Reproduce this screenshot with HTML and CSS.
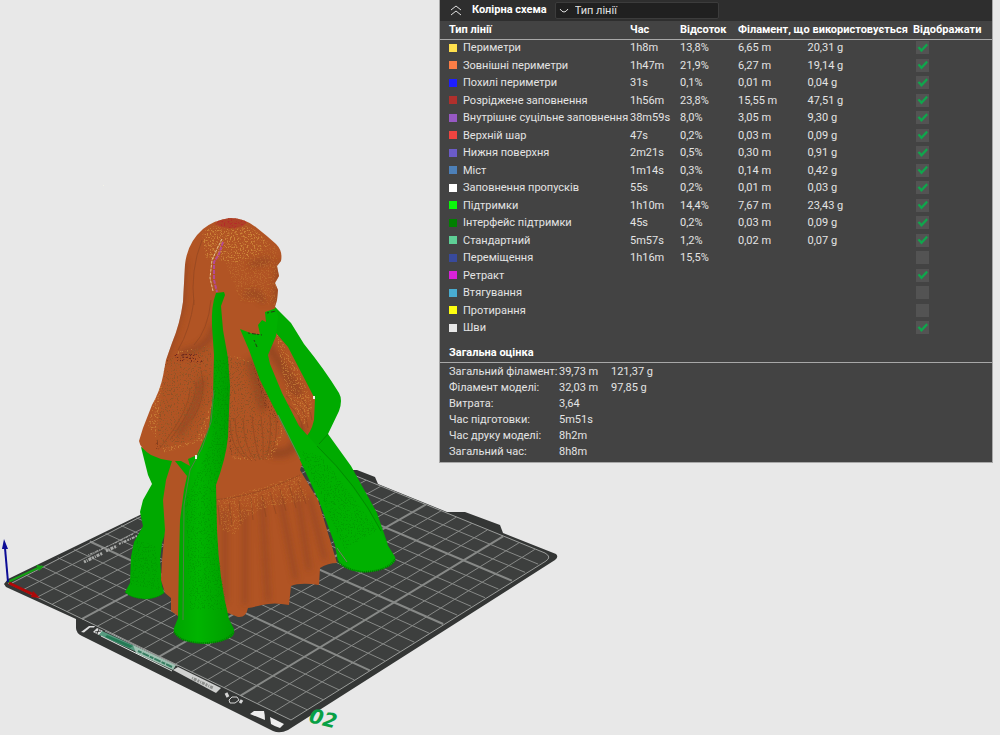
FILE: index.html
```html
<!DOCTYPE html>
<html lang="uk">

<head>
    <meta charset="UTF-8">
    <meta name="viewport" content="width=device-width, initial-scale=1.0">
    <title>Попередній перегляд</title>
    <link rel="stylesheet" href="styles.css">
</head>

<body>

    <!-- 3D scene -->
    <svg class="scene" viewBox="0 0 1000 735" preserveAspectRatio="xMinYMin meet" aria-hidden="true">
        <defs>
            <filter id="grain" x="0" y="0" width="100%" height="100%">
                <feTurbulence type="fractalNoise" baseFrequency="0.7" numOctaves="2" seed="4" result="n" />
                <feColorMatrix in="n" type="matrix" values="0 0 0 0 0  0 0 0 0 0  0 0 0 0 0  7 0 0 0 -3.7" result="m" />
                <feComposite in="SourceGraphic" in2="m" operator="in" />
            </filter>
            <filter id="soft" x="-20%" y="-20%" width="140%" height="140%">
                <feGaussianBlur stdDeviation="3" />
            </filter>
            <linearGradient id="gFront" x1="0" x2="1" y1="0" y2="0">
                <stop offset="0" stop-color="#00a400" />
                <stop offset="0.4" stop-color="#00b400" />
                <stop offset="1" stop-color="#009c00" />
            </linearGradient>
            <clipPath id="bodyClip">
                <use href="#figure" />
            </clipPath>
        </defs>

        <!-- Build plate -->
        <path fill="#343635" d="M4 584 L8 579 L142 514 L280 443 L350 470 L357 470 L375 477 L378 484 L447 512 L465 512 L500 525 L503 533 L556 554 Q559 557 555 560 L288 730 Q280 734 273 731 L82 636 Q76 633 76 628 L76 619 L6 587 Z" />
        <path fill="#3d3f3e" d="M10 583 L280 445 L548 554 Q552 557 547 560 L291 720 Z" />
        <g id="grid" fill="none" stroke="#878987"></g>
        <path fill="none" stroke="#9a9c9a" d="M12 583 L280 445 L545 553 Q552 557 546 561 L291 720 L8 583" />

        <!-- Plate markings -->
        <g fill="none" stroke="#a9aba9" stroke-width="3" stroke-dasharray="2 1 1 1 3 1">
            <path d="M84 562 L103 553" />
            <path d="M106 551 L117 546" />
            <path stroke-width="2" d="M119 544 L137 536" />
        </g>
        <path fill="none" stroke="#a9aba9" stroke-dasharray="1 1 3 1" d="M88 555 L108 546 M113 544 L133 534" />
        <path fill="#dedede" d="M81 632 l8 -6 h6 l-1 1.500 h-4 l-6 5z M93 632 l4 -4 6 3 -4 4z" />
        <path fill="none" stroke="#3d3f3e" d="M95 632 l6 -1 M97 634 l2 -5" />
        <path fill="#579b80" d="M102 631 L135 646 L141 653 L137 652 L99 635 Z" />
        <path fill="#247a55" d="M107 635 L133 646 L130 648 L105 637 Z" />
        <path fill="#9fc1b2" d="M133 645 L176 665 L173 670 L136 653 Z" />
        <path fill="none" stroke="#e0e5e2" d="M101 636 L172 671" />
        <path fill="none" stroke="#9fa3a1" d="M105 631 L178 666" />
        <path fill="none" stroke="#367d61" stroke-width="2" stroke-dasharray="4 1 7 1" d="M138 651 L172 667" />
        <path fill="#d0d1d0" d="M173 670 L178 667 L221 688 L216 693 Z" />
        <path fill="none" stroke="#8d8f8d" stroke-width="3" stroke-dasharray="1 1 3 1 2 1" d="M192 678 L213 688" />
        <path fill="none" stroke="#d6d6d6" d="M232 697 h5 l2 3 -4 3 h-5 l-1 -3z" />
        <path fill="none" stroke="#d6d6d6" stroke-width="3" d="M226 693 l2 4 M240 703 l2 -3" />
        <path fill="#ededed" d="M254 711 l10 0 q1 4 1 9 l-15 -6z M270 717 l14 7 -4 4 q-6 -2 -9 -4z" />
        <text class="plate-number" transform="translate(308 722) rotate(14)">02</text>

        <!-- Supports behind the figure -->
        <path fill="#00a900" d="M141 447 L150 450 L185 452 L185 475 L172 492 L168 510 L168 525 L162 543 L160 560 L162 586 Q164 591 164 593 Q156 599 145 599 Q130 598 125 592 L130 583 L131 557 L134 542 L143 526 L140 512 L143 500 L152 484 L148 475 Z" />
        <path fill="none" stroke="#008a00" stroke-dasharray="1 1" d="M125 592 Q130 598 145 599 Q158 598 164 593" />

        <!-- Figure -->
        <path id="figure" fill="#b15424" d="M230 218 Q214 220 203 229 Q187 243 185 265 L183 302 Q180 324 172 343 L166 360 L163 376 Q160 391 152 405 L143 428 L139 441 Q140 448 151 455 L161 459 L172 461 L166 480 L163 500 L165 530 L162 560 L161 580 L165 593 L171 598 L171 611 L178 616 L228 613 L238 617 Q246 618 248 608 Q254 607 262 605 Q274 602 289 605 L291 586 Q300 582 319 585 L320 568 Q328 563 337 563 L318 500 L300 470 L312 436 Q319 420 316 398 L307 363 L293 328 L275 307 L277 300 L278 290 L275 283 L279 276 L277 266 L281 261 Q283 251 276 244 Q266 235 257 228 Q245 218 230 218 Z" />
        <g clip-path="url(#bodyClip)">
            <g filter="url(#soft)" fill="none" stroke="#8b4220" opacity="0.750">
                <path stroke-width="6" d="M214 325 Q210 350 180 353 M202 378 Q200 405 178 435 M280 262 L277 305" />
                <path stroke-width="9" d="M268 345 L300 395 M250 359 L264 410 M301 424 Q297 460 270 452" />
                <path stroke-width="4" d="M245 510 V605 M280 497 L296 580 M262 500 L268 602 M309 496 L325 560 M225 510 V602 M297 492 L309 570" />
                <path stroke-width="5" d="M245 296 Q255 287 264 302 M250 265 L270 260 M184 260 L182 305 L166 358" />
            </g>
            <g fill="none" stroke="#8f4521" opacity="0.650">
                <path d="M230 420 Q230 450 248 460 M235 418 Q235 450 252 461 M243 418 Q244 450 256 461 M252 416 Q254 443 260 460 M261 416 Q264 440 263 460 M270 416 Q272 440 266 460 M276 420 Q278 440 270 458" />
                <path d="M286 396 Q306 406 308 428 M289 390 Q311 402 312 420 M284 402 Q302 412 303 433 M201 370 Q208 396 192 420 M196 382 Q198 402 170 440 M190 388 Q190 410 160 448" />
                <path d="M214 500 Q255 497 300 475 M218 505 L220 525 M229 503 L232 525 M239 500 L241 524 M251 498 L253 520 M262 495 L266 517 M270 492 L276 514 M280 489 L286 511 M289 485 L296 508 M298 481 L306 504" />
                <path d="M202 240 Q190 270 194 305 M194 300 Q190 330 178 350 M211 300 Q208 330 194 345" />
            </g>
            <g filter="url(#grain)" fill="#cf8a3a">
                <path opacity="0.900" d="M202 232 Q230 215 256 231 L270 244 L263 252 L238 262 L206 259 Z" />
                <path opacity="0.350" d="M224 260 L278 245 L276 305 L240 301 Z" />
                <path opacity="0.700" d="M163 368 L175 352 L211 345 L213 400 L204 440 L165 453 L148 425 Z" />
                <path opacity="0.650" d="M225 354 L250 360 L266 410 L285 430 L272 460 L232 460 Z" />
                <path opacity="0.650" d="M275 329 L298 370 L313 404 L305 428 L286 393 Z" />
                <path opacity="0.450" d="M218 500 L300 475 L309 500 L265 508 L246 518 L235 535 L222 530 Z" />
            </g>
            <ellipse fill="#ad3a28" opacity="0.700" cx="231" cy="223" rx="14" ry="5" />
            <g filter="url(#grain)">
                <ellipse fill="#b52a2a" cx="231" cy="223" rx="16" ry="6" />
                <path fill="#7d2420" d="M173 354 L198 354 L203 363 L176 362 Z" />
                <path fill="#5f2c18" opacity="0.500" d="M165 358 L211 345 L213 400 L196 440 L155 450 Z M224 355 L260 365 L281 430 L265 460 L230 455 Z" />
            </g>
        </g>
        <path fill="none" stroke="#e3c493" stroke-dasharray="3 1" d="M222 239 L217 249 L212 260 L210 278 L213 291" />
        <path fill="none" stroke="#b64991" stroke-width="2" stroke-dasharray="4 1" d="M223 242 L219 254 L214 262 L214 280 L217 292" />

        <!-- Supports on the right -->
        <path fill="#00ab00" d="M275 307 L291 323 L304 344 Q325 370 339 393 Q343 400 339 411 L328 434 L351 466 L377 513 L388 545 L370 535 L302 441 Q311 434 314 420 L315 399 L288 347 L276 333 Z" />
        <path fill="#00b100" d="M240 329 L253 334 L260 334 L258 325 L262 320 L266 322 L265 312 L271 310 L276 308 L278 317 L276 336 L268 355 L270 364 L282 393 L299 426 L317 446 Q353 483 377 524 L387 544 L395 557 Q397 562 388 567 Q370 575 354 571 Q338 567 337 556 L335 545 L319 501 L299 458 L277 414 L260 380 L249 350 Z" />
        <path fill="none" stroke="#008c00" d="M317 446 Q357 484 381 531 M319 444 L328 434" />
        <path fill="none" stroke="#007900" stroke-width="2" stroke-dasharray="1 1" d="M338 562 Q347 570 363 572 Q389 571 395 559" />
        <path fill="none" stroke="#263b16" stroke-dasharray="2 2 4 1" d="M248 333 L262 335 M254 340 L257 347 M267 313 L276 311" />
        <path fill="none" stroke="#777965" d="M278 415 L300 459 M337 548 L347 562" />

        <!-- Front support -->
        <path fill="url(#gFront)" d="M216 293 L224 292 L225 295 L221 306 L223 330 L228 358 L230 386 L228 437 Q226 458 216 485 L217 530 Q219 580 229 619 L234 629 Q236 637 225 640 Q205 647 186 641 Q172 636 174 628 L178 618 L179 560 L180 520 L184 490 L187 476 L175 461 L181 461 L190 466 L188 459 L197 455 L209 428 L213 395 L214 355 L212 326 Q211 306 216 293 Z" />
        <path fill="none" stroke="#527f45" d="M214 390 L211 422 L202 448 L190 470 L184 505 L183 620" />
        <path fill="none" stroke="#007f00" stroke-width="2" stroke-dasharray="1 1" d="M174 632 Q181 643 204 643 Q226 643 234 632" />
        <g filter="url(#grain)" fill="#007f00" opacity="0.300">
            <path d="M214 360 L229 360 L228 437 L216 485 L218 550 L227 610 L190 610 L185 500 L212 440 Z" />
            <path d="M130 585 L135 540 L155 545 L160 590 Z M300 450 L322 456 L378 530 L345 550 Z" />
        </g>
        <path fill="#f3f3e9" d="M195 455 h2 v4 h-2z M313 396 h2 v3 h-2z M103 185 h1 v1 h-1z" />

        <!-- Origin axes -->
        <g stroke-width="2" fill="none">
            <path stroke="#14a014" d="M8 582 L38 568" />
            <path stroke="#b00808" stroke-width="3" d="M9 583 L32 594" />
            <path stroke="#0c0c96" d="M8 582 L5 548" />
        </g>
        <path fill="#14a014" d="M36 565 L44 566 L39 571 Z" />
        <path fill="#b00808" d="M33 591 L40 598 L31 597 Z" />
        <path fill="#0c0c96" d="M4 539 L8 549 L2 549 Z" />
    </svg>

    <!-- Legend panel -->
    <main class="legend">
        <header class="legend-bar">
            <button type="button" class="collapse-btn" aria-label="Згорнути">
                <svg width="12" height="12" viewBox="0 0 12 12" fill="none" stroke="#e0e0e0">
                    <path d="M1 5 L6 1 L11 5 M1 10 L6 6 L11 10" />
                </svg>
            </button>
            <label for="scheme" class="legend-title">Колірна схема</label>
            <div class="select-box">
                <svg width="10" height="6" viewBox="0 0 10 6" fill="none" stroke="#e0e0e0">
                    <path d="M1 1 Q3 4 5 4 Q7 4 9 1" />
                </svg>
                <select id="scheme">
                    <option>Тип лінії</option>
                </select>
            </div>
        </header>

        <table class="lines">
            <thead>
                <tr>
                    <th class="col-name">Тип лінії</th>
                    <th class="col-time">Час</th>
                    <th class="col-percent">Відсоток</th>
                    <th class="col-used" colspan="2">Філамент, що використовується</th>
                    <th class="col-show">Відображати</th>
                </tr>
            </thead>
            <tbody>
                <tr><td><label for="l1"><i class="swatch yellow"></i>Периметри</label></td><td>1h8m</td><td>13,8%</td><td>6,65 m</td><td>20,31 g</td><td><input type="checkbox" id="l1" checked></td></tr>
                <tr><td><label for="l2"><i class="swatch orange"></i>Зовнішні периметри</label></td><td>1h47m</td><td>21,9%</td><td>6,27 m</td><td>19,14 g</td><td><input type="checkbox" id="l2" checked></td></tr>
                <tr><td><label for="l3"><i class="swatch blue"></i>Похилі периметри</label></td><td>31s</td><td>0,1%</td><td>0,01 m</td><td>0,04 g</td><td><input type="checkbox" id="l3" checked></td></tr>
                <tr><td><label for="l4"><i class="swatch brick"></i>Розріджене заповнення</label></td><td>1h56m</td><td>23,8%</td><td>15,55 m</td><td>47,51 g</td><td><input type="checkbox" id="l4" checked></td></tr>
                <tr><td><label for="l5"><i class="swatch purple"></i>Внутрішнє суцільне заповнення</label></td><td>38m59s</td><td>8,0%</td><td>3,05 m</td><td>9,30 g</td><td><input type="checkbox" id="l5" checked></td></tr>
                <tr><td><label for="l6"><i class="swatch red"></i>Верхній шар</label></td><td>47s</td><td>0,2%</td><td>0,03 m</td><td>0,09 g</td><td><input type="checkbox" id="l6" checked></td></tr>
                <tr><td><label for="l7"><i class="swatch violet"></i>Нижня поверхня</label></td><td>2m21s</td><td>0,5%</td><td>0,30 m</td><td>0,91 g</td><td><input type="checkbox" id="l7" checked></td></tr>
                <tr><td><label for="l8"><i class="swatch steel"></i>Міст</label></td><td>1m14s</td><td>0,3%</td><td>0,14 m</td><td>0,42 g</td><td><input type="checkbox" id="l8" checked></td></tr>
                <tr><td><label for="l9"><i class="swatch white"></i>Заповнення пропусків</label></td><td>55s</td><td>0,2%</td><td>0,01 m</td><td>0,03 g</td><td><input type="checkbox" id="l9" checked></td></tr>
                <tr><td><label for="l10"><i class="swatch lime"></i>Підтримки</label></td><td>1h10m</td><td>14,4%</td><td>7,67 m</td><td>23,43 g</td><td><input type="checkbox" id="l10" checked></td></tr>
                <tr><td><label for="l11"><i class="swatch green"></i>Інтерфейс підтримки</label></td><td>45s</td><td>0,2%</td><td>0,03 m</td><td>0,09 g</td><td><input type="checkbox" id="l11" checked></td></tr>
                <tr><td><label for="l12"><i class="swatch mint"></i>Стандартний</label></td><td>5m57s</td><td>1,2%</td><td>0,02 m</td><td>0,07 g</td><td><input type="checkbox" id="l12" checked></td></tr>
                <tr><td><label for="l13"><i class="swatch navy"></i>Переміщення</label></td><td>1h16m</td><td>15,5%</td><td></td><td></td><td><input type="checkbox" id="l13"></td></tr>
                <tr><td><label for="l14"><i class="swatch magenta"></i>Ретракт</label></td><td></td><td></td><td></td><td></td><td><input type="checkbox" id="l14" checked></td></tr>
                <tr><td><label for="l15"><i class="swatch sky"></i>Втягування</label></td><td></td><td></td><td></td><td></td><td><input type="checkbox" id="l15"></td></tr>
                <tr><td><label for="l16"><i class="swatch lemon"></i>Протирання</label></td><td></td><td></td><td></td><td></td><td><input type="checkbox" id="l16"></td></tr>
                <tr><td><label for="l17"><i class="swatch light"></i>Шви</label></td><td></td><td></td><td></td><td></td><td><input type="checkbox" id="l17" checked></td></tr>
            </tbody>
        </table>

        <h2>Загальна оцінка</h2>
        <table class="totals">
            <tr><th>Загальний філамент:</th><td>39,73 m</td><td>121,37 g</td></tr>
            <tr><th>Філамент моделі:</th><td>32,03 m</td><td>97,85 g</td></tr>
            <tr><th>Витрата:</th><td>3,64</td><td></td></tr>
            <tr><th>Час підготовки:</th><td>5m51s</td><td></td></tr>
            <tr><th>Час друку моделі:</th><td>8h2m</td><td></td></tr>
            <tr><th>Загальний час:</th><td>8h8m</td><td></td></tr>
        </table>
    </main>

    <script src="script.js"></script>
</body>

</html>
```

FILE: styles.css
```css
/* Basic Reset and Box Sizing */
* {
    margin: 0;
    padding: 0;
    box-sizing: border-box;
}

body {
    background: #e8e8e8;
    color: #e4e4e4;
    font-family: Roboto, 'Liberation Sans', sans-serif;
    font-size: 11px;
    min-height: 100vh;
    padding-right: 7px;
    overflow: hidden;
}

/* Scene lies under the panel */
.scene {
    position: absolute;
    top: 0;
    left: 0;
    width: 100%;
    height: 100%;
}

.plate-number {
    font-family: 'DejaVu Sans', sans-serif;
    font-size: 20px;
    font-weight: 700;
    font-style: italic;
    fill: #08a045;
}

/* Legend Panel */
.legend {
    position: relative;
    width: 100%;
    max-width: 554px;
    margin-left: auto;
    padding-bottom: 3px;
    background: #434343;
    border: 1px solid #a8a8a8;
    border-top: none;
}

.legend-bar {
    display: flex;
    align-items: center;
    height: 21px;
    padding-left: 10px;
    background: #2e2e2e;
}

.collapse-btn {
    width: 12px;
    height: 12px;
    margin-right: 10px;
    background: none;
    border: none;
    cursor: pointer;
}

.collapse-btn svg {
    display: block;
}

.legend-title {
    margin-right: 8px;
    padding-bottom: 3px;
    font-weight: 700;
    color: #fff;
}

.select-box {
    position: relative;
    width: 164px;
}

.select-box svg {
    position: absolute;
    top: 6px;
    left: 4px;
    pointer-events: none;
}

.select-box select {
    display: block;
    width: 100%;
    height: 17px;
    padding-left: 19px;
    font: inherit;
    color: #e4e4e4;
    background: #202020;
    border: 1px solid #3c3c3c;
    border-radius: 2px;
    appearance: none;
}

/* Line Types */
table {
    border-collapse: collapse;
}

th,
td {
    text-align: left;
    white-space: nowrap;
}

.lines {
    width: 100%;
    table-layout: fixed;
}

.lines th {
    height: 18px;
    color: #fff;
}

.lines thead {
    border-bottom: 1px solid #a8a8a8;
}

.lines th:first-child,
.lines td:first-child {
    padding-left: 9px;
}

.col-name {
    width: 190px;
}

.col-time {
    width: 50px;
}

.col-percent {
    width: 58px;
}

.col-used {
    width: 175px;
}

.lines td {
    height: 17px;
}

.lines tr:nth-child(even) td {
    height: 18px;
}

.lines td:nth-child(5) {
    position: relative;
    left: -18px;
}

.lines td:last-child {
    padding-left: 3px;
}

.lines label {
    display: flex;
    align-items: center;
    gap: 6px;
}

.swatch {
    width: 8px;
    height: 8px;
}

.yellow { background: #ffe04d; }
.orange { background: #fa7d46; }
.blue { background: #1e1eff; }
.brick { background: #b0302c; }
.purple { background: #9759c4; }
.red { background: #ee4440; }
.violet { background: #6b5bc8; }
.steel { background: #4d80b8; }
.white { background: #ffffff; }
.lime { background: #0af80a; }
.green { background: #008000; }
.mint { background: #5ecf96; }
.navy { background: #384a9c; }
.magenta { background: #d822d8; }
.sky { background: #49acd0; }
.lemon { background: #ffff10; }
.light { background: #e8e8e8; }

.lines input {
    display: block;
    width: 13px;
    height: 13px;
    background: #535353;
    appearance: none;
}

.lines input:checked::before {
    content: "";
    display: block;
    width: 13px;
    height: 13px;
    background: #10a64c;
    clip-path: polygon(12% 50%, 26% 40%, 42% 58%, 80% 18%, 92% 30%, 42% 84%);
}

/* Totals */
.legend h2 {
    height: 27px;
    padding: 9px 0 0 9px;
    font-size: 11px;
    line-height: 16px;
    color: #fff;
    border-bottom: 1px solid #a8a8a8;
}

.totals {
    margin: 0 9px;
}

.totals th {
    width: 110px;
    min-width: 110px;
    font-weight: 400;
}

.totals td {
    height: 16px;
    width: 52px;
}
```

FILE: script.js
```javascript
// Plate corners on screen: origin, end of X, far corner, end of Y
const corners = [[8, 583], [291, 720], [551, 556], [280, 445]];
const cells = 18;

// Perspective mapping of the unit square onto the corners
function project(u, v) {
    const [a, b, c, d] = corners;
    const dx1 = b[0] - c[0], dx2 = d[0] - c[0], sx = a[0] - b[0] + c[0] - d[0];
    const dy1 = b[1] - c[1], dy2 = d[1] - c[1], sy = a[1] - b[1] + c[1] - d[1];
    const det = dx1 * dy2 - dx2 * dy1;
    const g = (sx * dy2 - dx2 * sy) / det;
    const h = (dx1 * sy - sx * dy1) / det;
    const w = g * u + h * v + 1;
    return [
        ((b[0] - a[0] + g * b[0]) * u + (d[0] - a[0] + h * d[0]) * v + a[0]) / w,
        ((b[1] - a[1] + g * b[1]) * u + (d[1] - a[1] + h * d[1]) * v + a[1]) / w
    ];
}

function addLine(from, to, bold) {
    const path = document.createElementNS('http://www.w3.org/2000/svg', 'path');
    path.setAttribute('d', 'M' + from.join(' ') + 'L' + to.join(' '));
    path.setAttribute('stroke-width', bold ? 2 : 1);
    document.getElementById('grid').appendChild(path);
}

for (let i = 1; i < cells; i++) {
    const t = i / cells;
    addLine(project(t, 0), project(t, 1), i % 5 === 0);
    addLine(project(0, t), project(1, t), i % 5 === 0);
}
```
